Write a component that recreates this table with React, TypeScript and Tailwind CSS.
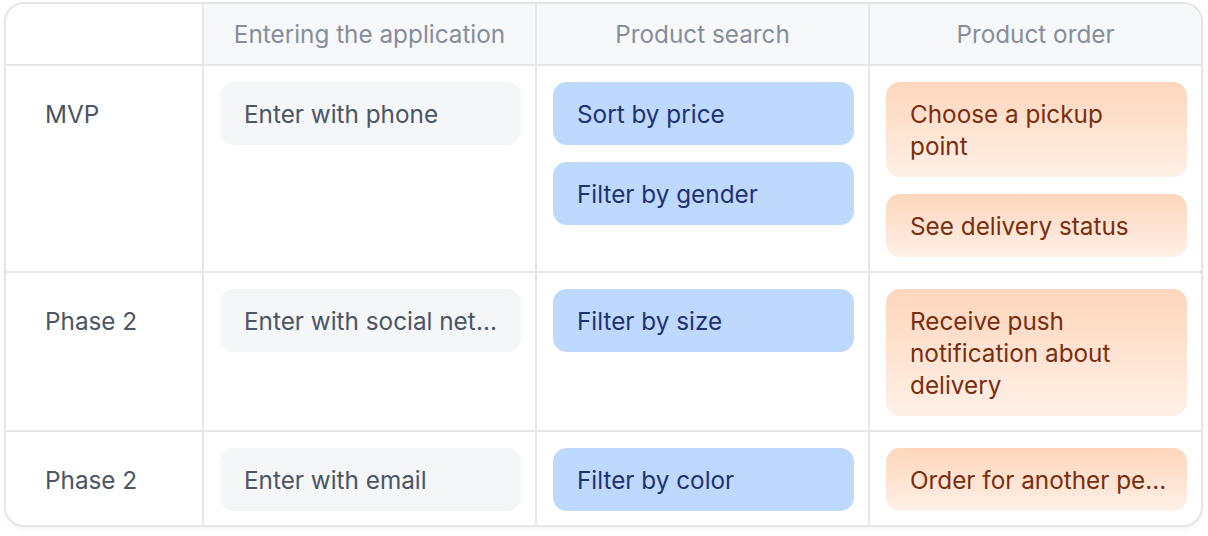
import React from "react";

type Kind = "gray" | "blue" | "orange";

const cardCls: Record<Kind, string> = {
  gray: "bg-[#f5f6f8] text-[#4b5563]",
  blue: "bg-[#bfd8fd] text-[#1e3272]",
  orange: "bg-gradient-to-b from-[#fed6bc] to-[#fff0e7] text-[#7a2e0e]",
};

function Card({ text, kind, truncate }: { text: string; kind: Kind; truncate?: boolean }) {
  return (
    <div
      className={`rounded-[14px] pl-6 pt-4 pb-[15px] text-[24.3px] font-normal leading-[32px] ${cardCls[kind]} ${
        truncate ? "truncate pr-[17px]" : "pr-6"
      }`}
    >
      {text}
    </div>
  );
}

const rows: { label: string; cells: { text: string; truncate?: boolean }[][] }[] = [
  {
    label: "MVP",
    cells: [
      [{ text: "Enter with phone" }],
      [{ text: "Sort by price" }, { text: "Filter by gender" }],
      [{ text: "Choose a pickup point" }, { text: "See delivery status" }],
    ],
  },
  {
    label: "Phase 2",
    cells: [
      [{ text: "Enter with social networks", truncate: true }],
      [{ text: "Filter by size" }],
      [{ text: "Receive push notification about delivery" }],
    ],
  },
  {
    label: "Phase 2",
    cells: [
      [{ text: "Enter with email" }],
      [{ text: "Filter by color" }],
      [{ text: "Order for another person", truncate: true }],
    ],
  },
];

const kinds: Kind[] = ["gray", "blue", "orange"];
const headers = ["Entering the application", "Product search", "Product order"];

export default function App() {
  return (
    <div
      className="w-[1208px] h-[536px] bg-white pl-[4px] pt-[2px]"
      style={{ fontFamily: "Inter, 'Noto Sans', sans-serif" }}
    >
      <div className="w-[1199px] rounded-[20px] border-2 border-[#e5e6eb] overflow-hidden shadow-[0_2px_4px_rgba(0,0,0,0.05)]">
        <div className="grid grid-cols-[196px_333px_333px_333px]">
          {/* header */}
          <div className="h-[60px]" />
          {headers.map((h) => (
            <div
              key={h}
              className="h-[60px] border-l-2 border-[#e5e6eb] bg-[#f7f8fa] flex items-center justify-center text-[24.3px] font-normal text-[#878e99]"
            >
              {h}
            </div>
          ))}
          {rows.map((r, ri) => (
            <React.Fragment key={ri}>
              <div className="border-t-2 border-[#e5e6eb] pl-[39px] pt-8 text-[24.3px] font-normal leading-[32px] text-[#4b5563]">
                {r.label}
              </div>
              {r.cells.map((c, ci) => (
                <div
                  key={ci}
                  className="border-t-2 border-l-2 border-[#e5e6eb] pl-4 pr-[14px] pt-4 pb-[14px] flex flex-col gap-[17px] min-w-0"
                >
                  {c.map((card, k) => (
                    <Card key={k} text={card.text} kind={kinds[ci]} truncate={card.truncate} />
                  ))}
                </div>
              ))}
            </React.Fragment>
          ))}
        </div>
      </div>
    </div>
  );
}
